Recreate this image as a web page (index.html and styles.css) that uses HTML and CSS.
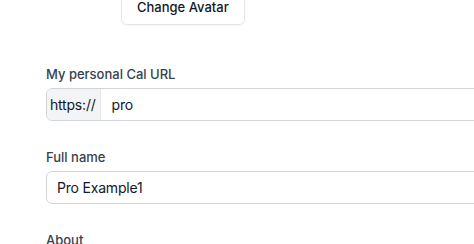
FILE: index.html
```html
<!DOCTYPE html>
<html>
<head>
<meta charset="utf-8">
<link rel="stylesheet" href="styles.css">
</head>
<body>
<div class="page">
  <div class="avatar-row">
    <div class="avatar"></div>
    <button class="btn">Change Avatar</button>
  </div>
  <div class="field">
    <label class="label">My personal Cal URL</label>
    <div class="input-group">
      <span class="addon">https://</span>
      <input class="input grouped" value="pro">
    </div>
  </div>
  <div class="field">
    <label class="label">Full name</label>
    <input class="input" value="Pro Example1">
  </div>
  <div class="field">
    <label class="label">About</label>
  </div>
</div>
</body>
</html>
```

FILE: styles.css
```css
html, body {
  margin: 0;
  padding: 0;
  background: #ffffff;
  overflow: hidden;
}
body {
  font-family: Inter, "Liberation Sans", sans-serif;
  color: #111827;
}
.page {
  width: 600px;
  padding-left: 46px;
  margin-top: -11px;
}
.avatar-row {
  display: flex;
  align-items: flex-end;
  gap: 11px;
  height: 36px;
}
.avatar {
  width: 64px;
  height: 1px;
}
.btn {
  height: 36px;
  padding: 0 15px;
  border: 1px solid #e5e7eb;
  border-radius: 6px;
  background: #ffffff;
  font-family: inherit;
  font-size: 13px;
  font-weight: 500;
  color: #111827;
  box-shadow: 0 1px 2px rgba(0,0,0,0.04);
}
.field {
  display: flex;
  flex-direction: column;
  gap: 7px;
}
.avatar-row + .field {
  margin-top: 42px;
}
.field + .field {
  margin-top: 29px;
}
.label {
  font-size: 13px;
  font-weight: 500;
  line-height: 14px;
  color: #374151;
}
.input-group {
  display: flex;
  height: 33px;
  border: 1px solid #d1d5db;
  border-radius: 6px;
  box-sizing: border-box;
  overflow: hidden;
}
.addon {
  display: flex;
  align-items: center;
  padding: 0 4px 0 3px;
  background: #f3f4f6;
  border-right: 1px solid #e5e7eb;
  font-size: 14px;
  letter-spacing: -0.2px;
  color: #111827;
}
.input {
  height: 33px;
  box-sizing: border-box;
  border: 1px solid #d1d5db;
  border-radius: 6px;
  padding: 0 10px;
  font-family: inherit;
  font-size: 14px;
  letter-spacing: -0.2px;
  color: #111827;
  background: #fff;
  outline: none;
}
.input.grouped {
  flex: 1;
  border: none;
  border-radius: 0;
  height: 100%;
  padding-left: 11px;
}
```
